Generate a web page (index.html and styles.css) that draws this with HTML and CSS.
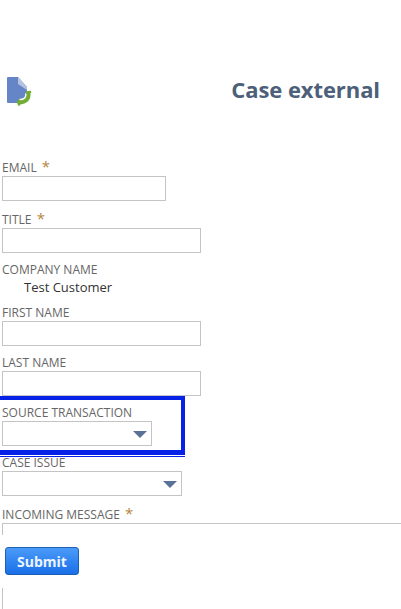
FILE: index.html
```html
<!DOCTYPE html>
<html lang="en">
<head>
  <meta charset="UTF-8">
  <meta name="viewport" content="width=device-width, initial-scale=1.0">
  <title>Case external</title>
  <link rel="stylesheet" href="styles.css">
</head>
<body>
  <div class="page">
    <div class="header">
      <svg class="logo" width="26" height="29" viewBox="0 0 26 29">
        <path d="M1 1Q1 0 2 0H12L21 10V26H2Q1 26 1 25Z" fill="#6685c6"/>
        <path d="M12 0L21 10V13L12 7Z" fill="#b5c3e0"/>
        <path d="M22.5 16Q23.5 25 13 25.5" fill="none" stroke="white" stroke-width="7"/>
        <path d="M22.5 16Q23.5 25 13 25.5" fill="none" stroke="#74ad35" stroke-width="4" stroke-linecap="round"/>
        <path d="M21 15.5L24 15M13 23.5L13 27.5" fill="none" stroke="#74ad35" stroke-width="2.6" stroke-linecap="round"/>
      </svg>
      <h1>Case external</h1>
    </div>

    <form class="case-form">
      <div class="field">
        <label class="required">Email <span class="req">*</span></label>
        <input type="text" class="input-email">
      </div>
      <div class="field">
        <label class="required">Title <span class="req">*</span></label>
        <input type="text" class="input-wide">
      </div>
      <div class="field">
        <label>Company Name</label>
        <div class="static-value">Test Customer</div>
      </div>
      <div class="field">
        <label>First Name</label>
        <input type="text" class="input-wide">
      </div>
      <div class="field">
        <label>Last Name</label>
        <input type="text" class="input-wide">
      </div>
      <div class="field">
        <label>Source Transaction</label>
        <div class="select select-short"><span class="arrow"></span></div>
      </div>
      <div class="field">
        <label>Case Issue</label>
        <div class="select select-long"><span class="arrow"></span></div>
      </div>
      <div class="field">
        <label class="required">Incoming Message <span class="req">*</span></label>
        <div class="message"></div>
      </div>
    </form>

    <!-- highlight drawn over the form -->
    <div class="highlight"></div>

    <div class="footer">
      <button type="button" class="submit">Submit</button>
    </div>
  </div>
</body>
</html>
```

FILE: styles.css
```css
html, body {
  margin: 0;
  padding: 0;
  background-color: white;
}
.page {
  position: relative;
  width: 401px;
  height: 609px;
  overflow: hidden;
  font-family: "Open Sans", sans-serif;
}
.header {
  display: flex;
  justify-content: space-between;
  align-items: flex-start;
  height: 156px;
  padding: 77px 21px 0 6px;
  box-sizing: border-box;
}
.logo {
  display: block;
}
h1 {
  margin: -1px 0 0;
  font-size: 22px;
  line-height: 26px;
  font-weight: 700;
  letter-spacing: -0.08px;
  color: #4d5f79;
}
.case-form {
  padding-left: 2px;
}
.field {
  display: flex;
  flex-direction: column;
  align-items: flex-start;
  margin-bottom: 7px;
}
.field label {
  height: 17px;
  padding-top: 1px;
  font-size: 12px;
  line-height: 18px;
  color: #666;
  text-transform: uppercase;
}
.field label.required {
  padding-top: 3px;
}
.req {
  margin-left: 2px;
  font-size: 15px;
  line-height: 14px;
  color: #b5853f;
}
.field input, .select {
  display: block;
  height: 25px;
  margin: 0;
  padding: 0;
  box-sizing: border-box;
  border: 1px solid #c4c4c4;
  background-color: white;
}
.input-email {
  width: 164px;
}
.input-wide {
  width: 199px;
}
.static-value {
  padding-left: 22px;
  font-size: 13px;
  line-height: 18px;
  color: #333;
}
.select {
  position: relative;
}
.select-short {
  width: 150px;
}
.select-long {
  width: 180px;
}
.arrow {
  position: absolute;
  right: 4px;
  top: 9px;
  border-top: 7px solid #5a7197;
  border-left: 7px solid transparent;
  border-right: 7px solid transparent;
}
.message {
  width: 420px;
  height: 100px;
  box-sizing: border-box;
  border: 1px solid #c4c4c4;
}
.highlight {
  position: absolute;
  left: -6px;
  top: 396px;
  width: 191px;
  height: 59px;
  box-sizing: border-box;
  border: 4px solid #0522e6;
  border-bottom-width: 5px;
  box-shadow: 0 1px 0 white, 0 2px 0 #0522e6;
}
.footer {
  position: absolute;
  left: 0;
  top: 535px;
  width: 100%;
  height: 53px;
  background-color: white;
}
.submit {
  position: absolute;
  left: 5px;
  top: 12px;
  width: 74px;
  height: 28px;
  padding: 0;
  border: 1px solid #1d5fb5;
  border-radius: 3px;
  background: linear-gradient(#4a9bf8, #1a6fe8);
  color: #eef5ff;
  font-family: "Open Sans", sans-serif;
  font-size: 14px;
  font-weight: 700;
}
```
